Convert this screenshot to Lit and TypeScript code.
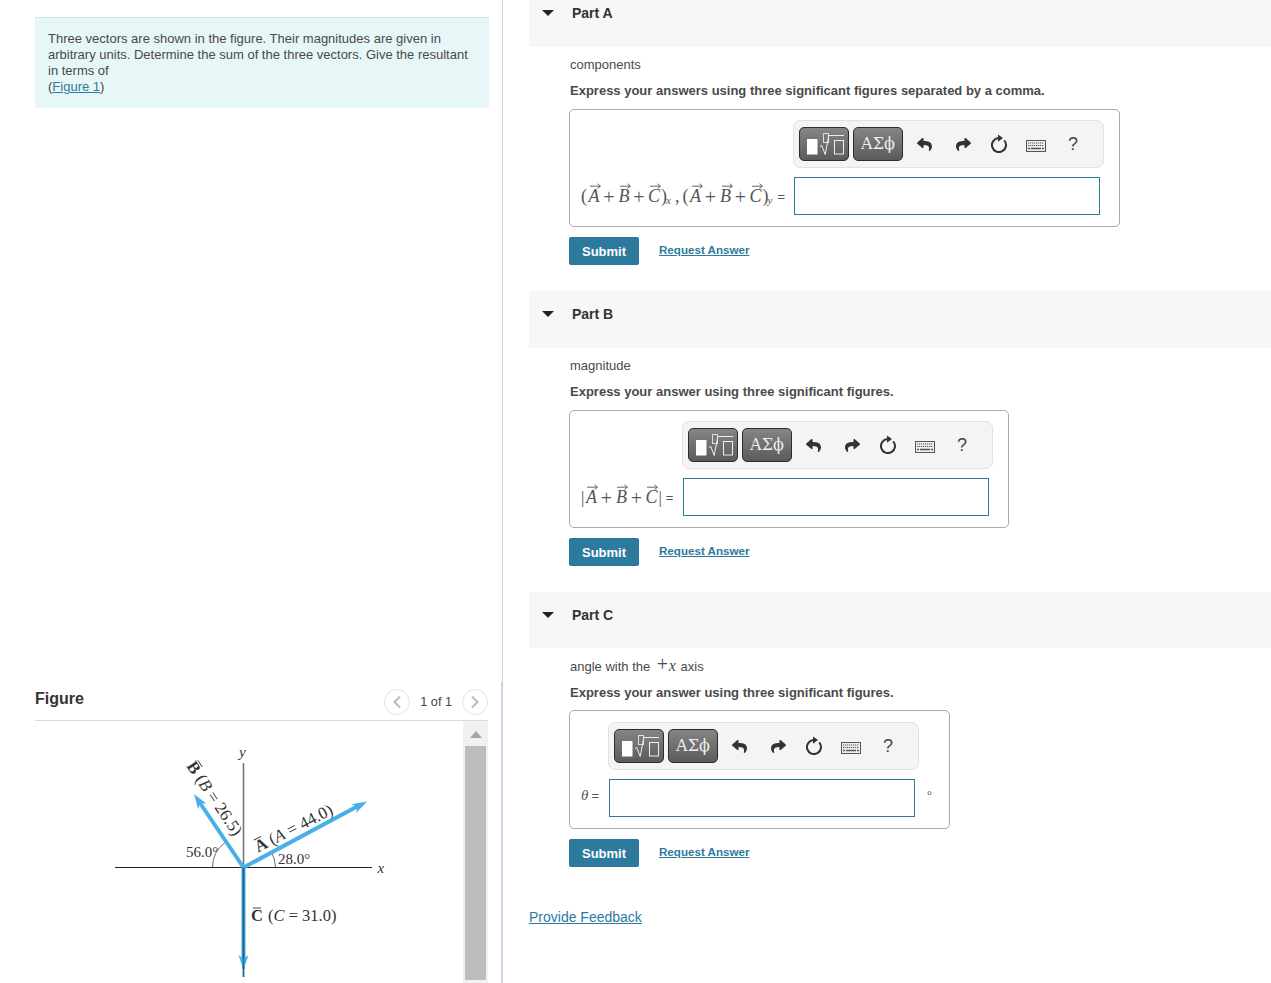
import { LitElement, html, css, svg } from "lit";
import { customElement } from "lit/decorators.js";

const ORIGIN = { x: 243.5, y: 868.5 };

function head(x: number, y: number, fill: string) {
  const dx = x - ORIGIN.x, dy = y - ORIGIN.y;
  const len = Math.hypot(dx, dy);
  const u = { x: dx / len, y: dy / len };
  const n = { x: -u.y, y: u.x };
  const p = (a: number, b: number) => `${x - u.x * a + n.x * b},${y - u.y * a + n.y * b}`;
  return svg`<polygon fill=${fill} points="${p(0, 0)} ${p(15, 5)} ${p(11, 0)} ${p(15, -5)}"></polygon>`;
}

function vec(letter: string) {
  return html`<span class="vec">${letter}<svg class="arrow" width="11" height="6" viewBox="0 0 11 6"><path d="M0 3.2 H10 M7.5 0.8 L10.5 3.2 L7.5 5.4" fill="none" stroke="#555" stroke-width=".9"></path></svg></span>`;
}

function sum() {
  return html`${vec("A")}<span class="plus">+</span>${vec("B")}<span class="plus">+</span>${vec("C")}`;
}

const sqrtIcon = html`<svg class="sq" width="40" height="24" viewBox="0 0 40 24">
  <rect x="3" y="7" width="10.5" height="15.5" fill="#fff"></rect>
  <rect x="19.5" y="1.5" width="5" height="9" fill="none" stroke="#ddd"></rect>
  <path d="M16 14.5 l1.8 -1 l3.4 9 l3.6 -19 h15.2" fill="none" stroke="#eee" stroke-width="1"></path>
  <rect x="30.5" y="8.5" width="9" height="13.5" fill="none" stroke="#eee"></rect>
</svg>`;

const reply = "M8.309 189.836L184.313 37.851C199.719 24.546 224 35.347 224 56.015v80.053c160.629 1.839 288 34.032 288 186.258 0 61.441-39.581 122.309-83.333 154.132-13.653 9.931-33.111-2.533-28.077-18.631 45.344-145.012-21.507-183.51-176.59-185.742V360c0 20.7-24.3 31.453-39.687 18.164l-176-152c-11.071-9.562-11.086-26.753 0-36.328z";

const toolbar = html`<div class="toolbar">
  <button class="tb-btn">${sqrtIcon}</button>
  <button class="tb-btn greek">ΑΣϕ</button>
  <svg class="ic undo" width="15" height="15" viewBox="0 0 512 512"><path d=${reply} fill="#333"></path></svg>
  <svg class="ic redo" width="15" height="15" viewBox="0 0 512 512"><path d=${reply} fill="#333" transform="translate(512 0) scale(-1 1)"></path></svg>
  <svg class="ic reset" width="18" height="19" viewBox="0 0 18 19">
    <path d="M8.5 4.1 A7 7 0 1 0 14.2 6.4" fill="none" stroke="#333" stroke-width="2"></path>
    <polygon points="8,0.4 8,7.8 13,4.1" fill="#333"></polygon>
  </svg>
  <svg class="ic kb" width="20" height="12" viewBox="0 0 20 12">
    <rect x="0.5" y="0.5" width="19" height="11" fill="#eee" stroke="#555"></rect>
    <path d="M2 3h16M2 5.5h16" stroke="#555" stroke-width="1.2" stroke-dasharray="1.2 .8" fill="none"></path>
    <path d="M2 8.5h2M5 8.5h10M16 8.5h2" stroke="#555" stroke-width="1.4" fill="none"></path>
  </svg>
  <span class="help">?</span>
</div>`;

const parts = [
  {
    name: "Part A", cls: "",
    desc: html`components`,
    instr: "Express your answers using three significant figures separated by a comma.",
    labelW: 213,
    label: html`<span class="paren">(</span>${sum()}<span class="paren">)</span><sub>x</sub><span class="comma">,</span><span class="paren">(</span>${sum()}<span class="paren">)</span><sub>y</sub><span class="eq">=</span>`,
    unit: "",
  },
  {
    name: "Part B", cls: "",
    desc: html`magnitude`,
    instr: "Express your answer using three significant figures.",
    labelW: 102,
    label: html`<span class="paren bar">|</span>${sum()}<span class="paren bar">|</span><span class="eq">=</span>`,
    unit: "",
  },
  {
    name: "Part C", cls: "shift",
    desc: html`angle with the <span class="inline-math"><span class="plus">+</span><i>x</i></span> axis`,
    instr: "Express your answer using three significant figures.",
    labelW: 28,
    label: html`<i class="theta">θ</i><span class="eq">=</span>`,
    unit: "°",
  },
];

@customElement("app-root")
export class AppRoot extends LitElement {
  static styles = css`
    :host {
      display: flex;
      width: 1271px;
      height: 983px;
      overflow: hidden;
      font-family: "Liberation Sans", Arial, sans-serif;
      font-size: 13px;
      color: #4a4a4a;
      background: #fff;
    }
    a { color: #2d7a9f; text-decoration: underline; }
    .left {
      width: 502px;
      box-sizing: border-box;
      flex: none;
      padding: 17px 13px 0 35px;
      display: flex;
      flex-direction: column;
      position: relative;
    }
    .left::after {
      content: "";
      position: absolute; right: 0; top: 682px; bottom: 0; width: 1px;
      background: #c6d4e3;
    }
    .rule { width: 1px; flex: none; background: #c6d4e3; }
    .intro {
      border-top: 1px solid #d5e3e5;
      background: #e7f6f7;
      padding: 13px 13px 13px;
      line-height: 16px;
      height: 64px;
    }
    .fig-head {
      margin-top: 572px;
      height: 41px;
      border-bottom: 1px solid #dcdcdc;
      display: flex;
      align-items: center;
      width: 453px;
    }
    .fig-title { font-size: 16px; font-weight: bold; color: #333; flex: 1; margin-top: -2px; }
    .nav { display: flex; align-items: center; gap: 10px; font-size: 12.7px; color: #444; margin-top: 3px; }
    .circ {
      width: 26px; height: 26px; box-sizing: border-box;
      border: 1px solid #e3e3e3; border-radius: 50%;
      display: flex; align-items: center; justify-content: center;
    }
    .fig-body { display: flex; height: 262px; width: 453px; }
    .fig-svg { display: block; flex: none; }
    .scroll {
      width: 25px; flex: none; background: #f1f1f1; position: relative;
      display: flex; flex-direction: column; align-items: center;
    }
    .scroll-up {
      width: 0; height: 0; margin-top: 10px;
      border-left: 6px solid transparent; border-right: 6px solid transparent;
      border-bottom: 7px solid #a6a6a6;
    }
    .thumb { width: 21px; height: 234px; margin-top: 8px; background: #bdbdbd; }

    .right { flex: 1; margin-top: -10px; margin-left: 26px; min-width: 0; }
    .part { height: 301px; }
    .part-head {
      height: 57px; box-sizing: border-box; background: #f7f7f7;
      display: flex; align-items: flex-start; padding: 15px 0 0 13px;
      font-size: 14px; font-weight: bold; color: #333; line-height: 16px;
    }
    .shift .part-head { height: 56px; }
    .shift .desc { margin-top: 11px; }
    .tri {
      width: 0; height: 0; margin: 5px 18px 0 0;
      border-left: 6px solid transparent; border-right: 6px solid transparent;
      border-top: 6px solid #222;
    }
    .part-body { padding-left: 40px; }
    .desc { line-height: 16px; height: 16px; margin-top: 10px; padding-left: 1px; color: #4a4a4a; }
    .instr { font-weight: bold; line-height: 16px; margin-top: 10px; padding-left: 1px; color: #4a4a4a; }
    .box {
      display: inline-grid;
      grid-template-columns: auto 306px auto;
      margin-top: 10px;
      border: 1px solid #aaa;
      border-radius: 5px;
      padding: 10px 19px 11px 11px;
      vertical-align: top;
      color: #444;
    }
    .shift .box { margin-top: 9px; padding-top: 11px; }
    .toolbar {
      grid-column: 2 / 4;
      margin-left: -1px;
      margin-right: -5px;
      width: 311px; height: 48px; box-sizing: border-box;
      background: #f4f4f4; border: 1px solid #e2e2e2; border-radius: 7px;
      display: flex; align-items: center; padding-left: 5px;
      position: relative;
    }
    .tb-btn {
      width: 50px; height: 34px; box-sizing: border-box; padding: 0; margin-right: 4px;
      background: linear-gradient(#858585, #5b5b5b);
      border: 1px solid #2c2c2c; border-radius: 5px;
      display: flex; align-items: center; justify-content: center;
      color: #eee;
    }
    .greek { font-family: "DejaVu Serif", serif; font-size: 16px; padding-bottom: 2px; }
    .sq { display: block; }
    .ic { flex: none; display: block; }
    .undo { margin-left: 10px; }
    .redo { margin-left: 24px; }
    .reset { margin-left: 19px; margin-bottom: 2px; }
    .kb { margin-left: 18px; margin-top: 4px; }
    .help { margin-left: 22px; font-size: 18px; color: #444; margin-top: 1px; }
    .label {
      grid-column: 1; margin-top: 10px; height: 37px; box-sizing: content-box;
      display: flex; align-items: center; padding-top: 0;
      font-family: "Liberation Serif", serif; font-size: 18px; color: #555;
      white-space: nowrap;
    }
    .shift .label { margin-top: 7px; }
    .input {
      grid-column: 2; margin-top: 9px; height: 38px; box-sizing: border-box;
      border: 1px solid #2d7a9f; background: #fff;
    }
    .unit { grid-column: 3; margin-top: 9px; width: 0; text-indent: 12px; white-space: nowrap; font-size: 12px; padding-top: 9px; font-family: "Liberation Serif", serif; color: #555; }
    .hasunit .box { padding-right: 34px; }
    .vec { position: relative; font-style: italic; display: inline-block; width: 14px; text-align: center; }
    .arrow { position: absolute; left: 3px; top: -3px; display: block; }
    .plus { font-family: "Liberation Serif", serif; width: 16px; text-align: center; font-size: 20px; line-height: 18px; display: inline-block; }
    .paren { font-size: 18px; }
    .bar { font-size: 17px; }
    sub { font-size: 11px; font-style: italic; line-height: 0; margin-top: 7px; width: 9px; margin-left: -1px; }
    .comma { margin: 0 3px 0 0; }
    .eq { font-family: "Liberation Sans", sans-serif; font-size: 13px; margin-left: 4px; }
    sub + .eq { margin-left: 1px; }
    .theta { font-size: 15px; margin-right: -1px; }
    .inline-math { font-family: "Liberation Serif", serif; font-size: 16px; line-height: 0; margin-left: 2px; margin-right: 1px; }
    .inline-math .plus { font-size: 20px; width: 13px; line-height: 0; }
    .actions { margin-top: 10px; display: flex; align-items: center; height: 28px; }
    .submit {
      width: 70px; height: 28px; padding: 0; box-sizing: border-box;
      background: #2d7a9f; color: #fff; border: 0; border-radius: 2px;
      font-family: inherit; font-size: 13px; font-weight: bold;
    }
    .req { margin-left: 20px; font-size: 11.6px; font-weight: bold; margin-top: -4px; }
    .feedback { font-size: 14px; }
    .feedback-wrap { margin-top: 16px; }
  `;

  render() {
    return html`
      <div class="left">
        <div class="intro">Three vectors are shown in the figure. Their magnitudes are given in arbitrary units. Determine the sum of the three vectors. Give the resultant in terms of<br />(<a href="#">Figure 1</a>)</div>
        <div class="fig-head">
          <span class="fig-title">Figure</span>
          <div class="nav">
            <span class="circ"><svg width="10" height="14" viewBox="0 0 10 14"><path d="M8 1.5 L2.5 7 L8 12.5" fill="none" stroke="#bbb" stroke-width="2"></path></svg></span>
            <span>1 of 1</span>
            <span class="circ"><svg width="10" height="14" viewBox="0 0 10 14"><path d="M2 1.5 L7.5 7 L2 12.5" fill="none" stroke="#bbb" stroke-width="2"></path></svg></span>
          </div>
        </div>
        <div class="fig-body">
          ${this.figure()}
          <div class="scroll"><div class="scroll-up"></div><div class="thumb"></div></div>
        </div>
      </div>
      <div class="rule"></div>
      <div class="right">
        ${parts.map((p) => html`
          <section class="part ${p.cls} ${p.unit ? "hasunit" : ""}">
            <div class="part-head"><span class="tri"></span>${p.name}</div>
            <div class="part-body">
              <div class="desc">${p.desc}</div>
              <div class="instr">${p.instr}</div>
              <div class="box">
                <span></span>
                ${toolbar}
                <div class="label" style="width:${p.labelW}px">${p.label}</div>
                <div class="input"></div>
                <div class="unit">${p.unit}</div>
              </div>
              <div class="actions">
                <button class="submit">Submit</button>
                <a class="req" href="#">Request Answer</a>
              </div>
            </div>
          </section>`)}
        <div class="feedback-wrap"><a class="feedback" href="#">Provide Feedback</a></div>
      </div>
    `;
  }

  figure() {
    const O = ORIGIN;
    const blue = "#4aaee8";
    return html`<svg class="fig-svg" width="428" height="262" viewBox="35 722 428 262" font-family="Liberation Serif, serif" font-size="15" fill="#333">
      <line x1="115" y1="868.5" x2="372" y2="868.5" stroke="#222" stroke-width="1"></line>
      <line x1="243.5" y1="764" x2="243.5" y2="978" stroke="#777" stroke-width="1.6"></line>
      <path d="M275.5 868 A32 32 0 0 0 271 852.5" fill="none" stroke="#444" stroke-width=".8"></path>
      <path d="M212.5 868 A31 31 0 0 1 225 843.5" fill="none" stroke="#444" stroke-width=".8"></path>
      <line x1=${O.x} y1=${O.y} x2="358" y2="807" stroke=${blue} stroke-width="4"></line>
      ${head(367, 802.5, blue)}
      <line x1=${O.x} y1=${O.y} x2="200" y2="804" stroke=${blue} stroke-width="4"></line>
      ${head(194, 795, blue)}
      <line x1=${O.x} y1=${O.y} x2=${O.x} y2="962" stroke=${blue} stroke-width="4"></line>
      <line x1=${O.x} y1=${O.y} x2=${O.x} y2="970" stroke="#1a6694" stroke-width="2"></line>
      ${head(243.5, 971, blue)}
      <line x1=${O.x} y1="955" x2=${O.x} y2="978" stroke="#1a6694" stroke-width="1.4"></line>

      <text x="239" y="758" font-style="italic">y</text>
      <text x="377.5" y="874" font-style="italic">x</text>
      <text x="186" y="858">56.0°</text>
      <text x="278" y="865">28.0°</text>

      <g transform="translate(258 853.5) rotate(-27)" font-size="17">
        <text x="0" y="0" font-weight="bold">A</text>
        <line x1="2" y1="-13" x2="10" y2="-13" stroke="#333" stroke-width=".9"></line>
        <text x="16" y="0"><tspan>(</tspan><tspan font-style="italic">A</tspan> = 44.0)</text>
      </g>
      <g transform="translate(186 767) rotate(56)" font-size="17">
        <text x="0" y="0" font-weight="bold">B</text>
        <line x1="2" y1="-13" x2="10" y2="-13" stroke="#333" stroke-width=".9"></line>
        <text x="16" y="0"><tspan>(</tspan><tspan font-style="italic">B</tspan> = 26.5)</text>
      </g>
      <g transform="translate(251 922)" font-size="16.5">
        <text x="0" y="0" font-weight="bold">C</text>
        <line x1="2" y1="-13" x2="10" y2="-13" stroke="#333" stroke-width=".9"></line>
        <text x="17" y="0"><tspan>(</tspan><tspan font-style="italic">C</tspan> = 31.0)</text>
      </g>
    </svg>`;
  }
}
